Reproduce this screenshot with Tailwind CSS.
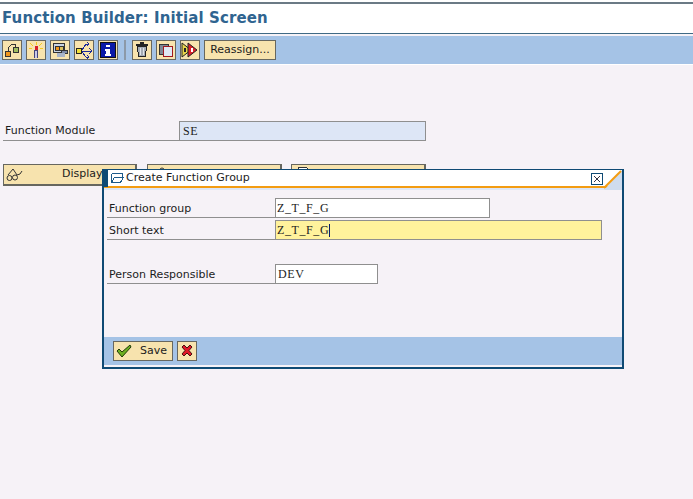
<!DOCTYPE html>
<html>
<head>
<meta charset="utf-8">
<script src="https://cdn.jsdelivr.net/npm/@tailwindcss/browser@4"></script>
</head>
<body class="w-[693px] h-[499px] overflow-hidden bg-[#f6f2f7] font-['DejaVu_Sans',sans-serif] text-[11px] text-[#1c1c1c]">
<div class="relative h-[499px]">
  <div class="h-[2px] bg-white"></div>
  <div class="h-[2px] bg-[#6b7a85]"></div>
  <div class="h-[29px] bg-white flex items-center pl-[2px]">
    <h1 class="text-[15px] font-bold text-[#2f6490] tracking-[0.1px] font-['DejaVu_Sans',sans-serif]">Function Builder: Initial Screen</h1>
  </div>
  <div class="h-[1px] bg-[#3f6a85]"></div>
  <div class="h-[2px] bg-[#f6f2f7]"></div>
  <div class="h-[28px] bg-[#a5c3e6] flex items-center pl-[2px] gap-[4px]">
    <button class="w-[20px] h-[20px] bg-[#f7e3ae] border border-[#67675f] flex items-center justify-center">
      <svg width="16" height="16" viewBox="0 0 16 16" shape-rendering="crispEdges"><path d="M4 9V6l3-3 1-1h3v3" fill="none" stroke="#333"/><rect x="1.500" y="9.500" width="5" height="5" fill="#f0961c" stroke="#333"/><rect x="9.500" y="5.500" width="5" height="5" fill="#9fbc60" stroke="#333"/></svg>
    </button>
    <button class="w-[20px] h-[20px] bg-[#f7e3ae] border border-[#67675f] flex items-center justify-center">
      <svg width="16" height="16" viewBox="0 0 16 16" shape-rendering="crispEdges"><path d="M8 0v3M2 1l3 3M14 1l-3 3M1 6h3M12 6h3" stroke="#f2c820"/><rect x="6.500" y="4" width="3" height="4" fill="#d8202a"/><rect x="6.500" y="8" width="3" height="8" fill="#c9c9e8" stroke="#44447a"/></svg>
    </button>
    <button class="w-[20px] h-[20px] bg-[#f7e3ae] border border-[#67675f] flex items-center justify-center">
      <svg width="16" height="16" viewBox="0 0 16 16" shape-rendering="crispEdges"><rect x="1.500" y="1.500" width="11" height="9" fill="#c8d4e4" stroke="#333"/><rect x="3.500" y="4.500" width="4" height="4" fill="#f0961c" stroke="#333"/><rect x="7.500" y="4.500" width="4" height="4" fill="#d9c060" stroke="#333"/><rect x="9.500" y="8.500" width="6" height="3" fill="#7c8aa8" stroke="#333"/><rect x="5" y="11" width="8" height="4" fill="#a8b4c8"/></svg>
    </button>
    <button class="w-[20px] h-[20px] bg-[#f7e3ae] border border-[#67675f] flex items-center justify-center">
      <svg width="18" height="18" viewBox="0 0 18 18" shape-rendering="crispEdges"><rect x="1.500" y="7.500" width="5" height="5" fill="#f2e23a" stroke="#222"/><path d="M7 10h10M14 7l3 3-3 3M7 9l4-6h3M12 1l2 2-2 2M7 11l4 5h3M12 14l2 2-2 2" fill="none" stroke="#1a2a9a"/></svg>
    </button>
    <button class="w-[20px] h-[20px] bg-[#f7e3ae] border border-[#67675f] flex items-center justify-center">
      <svg width="16" height="16" viewBox="0 0 16 16" shape-rendering="crispEdges"><rect x="0.500" y="0.500" width="15" height="15" fill="#0a1aa8" stroke="#111"/><rect x="6" y="3" width="4" height="2" fill="#fff"/><path d="M5 7h5v5h1v2H5v-2h1V9H5z" fill="#fff"/></svg>
    </button>
    <div class="w-[2px] h-[20px] bg-[#8c99a8] mx-[2px]"></div>
    <button class="w-[20px] h-[20px] bg-[#f7e3ae] border border-[#67675f] flex items-center justify-center">
      <svg width="14" height="16" viewBox="0 0 14 16" shape-rendering="crispEdges"><path d="M1 3h12M5 1h4" stroke="#222" stroke-width="2"/><path d="M2.500 4.500h9l-1 10h-7z" fill="#a3abb5" stroke="#222"/><path d="M5.500 6v7M8.500 6v7" stroke="#e0e4ea"/></svg>
    </button>
    <button class="w-[20px] h-[20px] bg-[#f7e3ae] border border-[#67675f] flex items-center justify-center">
      <svg width="16" height="16" viewBox="0 0 16 16" shape-rendering="crispEdges"><rect x="1.500" y="2.500" width="9" height="10" fill="#7d8794" stroke="#333"/><rect x="5.500" y="4.500" width="9" height="10" fill="#e0e8f4" stroke="#a01820"/></svg>
    </button>
    <button class="w-[20px] h-[20px] bg-[#f7e3ae] border border-[#67675f] flex items-center justify-center">
      <svg width="18" height="16" viewBox="0 0 18 16"><path d="M1 1l9 7-9 7z" fill="#e9d64a" stroke="#222"/><path d="M7 1l9 7-9 7z" fill="#d8202a" stroke="#222"/><rect x="3" y="6" width="2" height="4" fill="#222"/><rect x="10" y="6" width="2" height="4" fill="#fff"/></svg>
    </button>
    <button class="w-[72px] h-[20px] bg-[#f7e3ae] border border-[#67675f] text-[11px] flex items-center justify-center">Reassign...</button>
  </div>
  <div class="h-[1px] bg-white"></div>

  <div class="pt-[56px] pl-[3px]">
    <div class="flex h-[20px] items-stretch">
      <label class="w-[176px] pl-[2px] border-b border-[#8f8f8f] flex items-end pb-[1px]">Function Module</label>
      <div class="w-[247px] bg-[#dde6f6] border border-[#8f8f8f] font-['Liberation_Serif',serif] text-[12px] tracking-[0.6px] pl-[3px] flex items-center">SE</div>
    </div>
    <div class="flex mt-[23px] h-[22px]">
      <button class="w-[134px] bg-[#f7e3ae] border border-r-2 border-b-2 border-[#67675f] flex items-center pl-[2px]">
        <svg width="18" height="14" viewBox="0 0 18 14" fill="none" stroke="#333"><path d="M7 1L2 7M7 1l4 6M11 7l3-1 2-3"/><circle cx="3.500" cy="10" r="2.500"/><circle cx="9" cy="9.500" r="2.500"/></svg>
        <span class="ml-[38px]">Display</span>
      </button>
      <button class="w-[135px] ml-[10px] bg-[#f7e3ae] border border-r-2 border-b-2 border-[#67675f] relative overflow-hidden">
        <svg class="absolute left-[8px] top-[1px]" width="14" height="14" viewBox="0 0 14 14" fill="none" stroke="#333"><circle cx="6" cy="4" r="2"/></svg>
      </button>
      <button class="w-[135px] ml-[9px] bg-[#f7e3ae] border border-r-2 border-b-2 border-[#67675f] relative overflow-hidden">
        <svg class="absolute left-[5px] top-[1px]" width="14" height="14" viewBox="0 0 14 14" fill="#fff" stroke="#333" shape-rendering="crispEdges"><path d="M1.500 1.500h8l3 3v9h-11z"/></svg>
      </button>
    </div>
  </div>

  <div class="absolute left-[102px] top-[169px] w-[522px] h-[200px] border-2 border-t-[1px] border-[#0f4a74] bg-[#f6f2f7] flex flex-col">
    <div class="relative h-[18px] bg-white border-b-2 border-[#f39c12] flex items-center">
      <div class="w-[5px] h-[18px] bg-[#0f4a74] -ml-[1px]"></div>
      <svg class="ml-[2px]" width="15" height="14" viewBox="0 0 15 14" fill="none" stroke="#1c5a8a" shape-rendering="crispEdges"><path d="M1.500 2.500h11v3M1.500 2.500v9h9l3-5h-9l-3 5"/></svg>
      <span class="text-[11px] ml-[1px]">Create Function Group</span>
      <div class="absolute left-[487px] top-[3px] w-[12px] h-[12px] border border-[#0f4a74] flex items-center justify-center">
        <svg width="8" height="8" viewBox="0 0 8 8" stroke="#334"><path d="M1 1l6 6M7 1l-6 6"/></svg>
      </div>
      <svg class="absolute right-0 top-0" width="18" height="20" viewBox="0 0 18 20"><path d="M18 0v20H0z" fill="#cfdcee"/><path d="M0 18L17 1" stroke="#f39c12" stroke-width="2"/></svg>
    </div>
    <div class="h-[2px] bg-[#dde6f6]"></div>
    <div class="flex-1 pl-[3px] pt-[8px]">
      <div class="flex h-[20px] items-stretch">
        <label class="w-[168px] pl-[2px] border-b border-[#8f8f8f] flex items-end">Function group</label>
        <div class="w-[215px] bg-white border border-[#8f8f8f] font-['Liberation_Serif',serif] text-[12px] pl-[1px] tracking-[0.6px] flex items-center">Z_T_F_G</div>
      </div>
      <div class="flex h-[20px] mt-[2px] items-stretch">
        <label class="w-[168px] pl-[2px] border-b border-[#8f8f8f] flex items-end">Short text</label>
        <div class="w-[327px] bg-[#fff29c] border border-[#8f8f8f] font-['Liberation_Serif',serif] text-[12px] pl-[1px] tracking-[0.6px] flex items-center">Z_T_F_G<span class="inline-block w-[1px] h-[13px] bg-[#0a1a6a]"></span></div>
      </div>
      <div class="flex h-[20px] mt-[24px] items-stretch">
        <label class="w-[168px] pl-[2px] border-b border-[#8f8f8f] flex items-end">Person Responsible</label>
        <div class="w-[103px] bg-white border border-[#8f8f8f] font-['Liberation_Serif',serif] text-[12px] pl-[2px] tracking-[0.6px] flex items-center">DEV</div>
      </div>
    </div>
    <div class="h-[28px] mb-[2px] bg-[#a5c3e6] flex items-center pl-[9px] gap-[4px]">
      <button class="w-[60px] h-[20px] bg-[#f7e3ae] border border-[#67675f] flex items-center pl-[2px]">
        <svg width="16" height="14" viewBox="0 0 16 14"><path d="M1 7l2-2 3 3 8-7 1 2-9 10z" fill="#6cae20" stroke="#1f3a08"/></svg>
        <span class="ml-[8px]">Save</span>
      </button>
      <button class="w-[20px] h-[20px] bg-[#f7e3ae] border border-[#67675f] flex items-center justify-center">
        <svg width="14" height="14" viewBox="0 0 14 14"><path d="M2 3l2-2 3 3 3-3 2 2-3 3.500 3 3.500-2 2-3-3-3 3-2-2 3-3.500z" fill="#e01828" stroke="#4a1010"/></svg>
      </button>
    </div>
  </div>
</div>
</body>
</html>
